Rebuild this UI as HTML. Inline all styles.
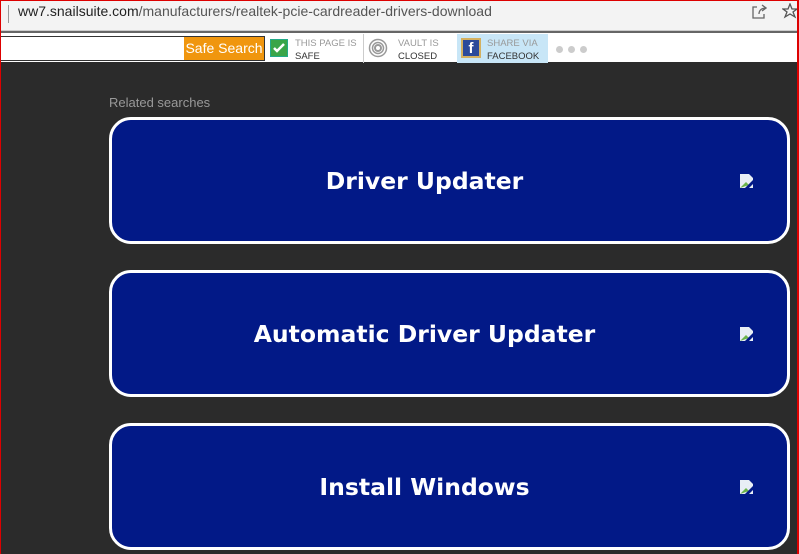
<!DOCTYPE html>
<html><head><meta charset="utf-8"><style>
*{margin:0;padding:0;box-sizing:border-box}
body{width:799px;height:554px;overflow:hidden;background:#2b2b2b;font-family:"Liberation Sans",sans-serif;position:relative}
.frame{position:absolute;inset:0;border-left:1px solid #d00;border-right:2px solid #d00;border-top:1px solid #d00;pointer-events:none;z-index:10}
.url{position:absolute;left:0;top:0;width:799px;height:31px;background:#f3f3f3;border-bottom:1px solid #ccc}
.url .t{position:absolute;left:18px;top:3px;font-size:14px;color:#555;white-space:nowrap}
.url .dk{color:#222}
.url .bar{position:absolute;left:8px;top:5px;width:1px;height:18px;background:#999}
.tb{position:absolute;left:0;top:31px;width:799px;height:31px;background:#fff;border-top:2px solid #666}
.inp{position:absolute;left:0;top:3px;width:265px;height:25px;border:1px solid #333;border-left:none;background:#fff}
.ss{position:absolute;left:184px;top:4px;width:80px;height:23px;background:#f0960e;color:#fff;font-size:14px;line-height:23px;text-align:center}
.sm{position:absolute;font-size:9.5px;color:#999;line-height:13px}
.sm b{font-weight:normal;color:#333}
.sep{position:absolute;top:1px;width:1px;height:29px;background:#ccc}
.related{position:absolute;left:109px;top:95px;font-size:13px;color:#999}
.btn{position:absolute;left:109px;width:681px;height:127px;background:#021987;border:3px solid #fff;border-radius:22px;color:#fff;font-family:"DejaVu Sans",sans-serif;font-weight:bold;font-size:23.5px;text-align:center;line-height:123px;padding-right:50px}
.ic{position:absolute;right:32px;top:53px;width:16px;height:16px}
</style></head><body>
<div class="url"><div class="bar"></div><div class="t"><span class="dk">ww7.snailsuite.com</span>/manufacturers/realtek-pcie-cardreader-drivers-download</div>
<svg style="position:absolute;left:751px;top:4px" width="16" height="16" viewBox="0 0 16 16" fill="none" stroke="#666" stroke-width="1.3"><path d="M6 3H2v11h11v-4M8 10c0-4 3-6 7-6M11 1l4 3-4 3"/></svg>
<svg style="position:absolute;left:782px;top:3px" width="16" height="16" viewBox="0 0 16 16" fill="none" stroke="#555" stroke-width="1.3"><path d="M8 1l2 5h5l-4 3 2 5-5-3-5 3 2-5-4-3h5z"/></svg>
</div>
<div class="tb">
<div class="inp"></div><div class="ss">Safe Search</div>
<div style="position:absolute;left:270px;top:6px;width:18px;height:18px;background:#3aa548;border:1px solid #2a8"><svg width="16" height="16" viewBox="0 0 16 16"><path d="M3 8l3 3 7-7" stroke="#fff" stroke-width="2.5" fill="none"/></svg></div>
<div class="sm" style="left:295px;top:4px">THIS PAGE IS<br><b>SAFE</b></div>
<div class="sep" style="left:363px"></div>
<svg style="position:absolute;left:368px;top:5px" width="20" height="20" viewBox="0 0 20 20" fill="none" stroke="#999" stroke-width="1.5"><circle cx="10" cy="10" r="8.5"/><circle cx="10" cy="10" r="5.5"/><circle cx="10" cy="10" r="3" stroke-width="2"/></svg>
<div class="sm" style="left:398px;top:4px">VAULT IS<br><b>CLOSED</b></div>
<div style="position:absolute;left:457px;top:1px;width:91px;height:29px;background:#c8e6f7"></div>
<div style="position:absolute;left:461px;top:5px;width:20px;height:20px;background:#2c4a9a;border:2px solid #d4b060;color:#fff;font-weight:bold;font-size:15px;line-height:18px;text-align:center">f</div>
<div class="sm" style="left:487px;top:4px">SHARE VIA<br><b>FACEBOOK</b></div>
<div style="position:absolute;left:556px;top:13px;width:7px;height:7px;border-radius:50%;background:#ccc"></div>
<div style="position:absolute;left:568px;top:13px;width:7px;height:7px;border-radius:50%;background:#ccc"></div>
<div style="position:absolute;left:580px;top:13px;width:7px;height:7px;border-radius:50%;background:#ccc"></div>
</div>
<div class="related">Related searches</div>
<div class="btn" style="top:117px">Driver Updater<svg class="ic" viewBox="0 0 16 16"><path d="M1 1h9l4 4v10H1z" fill="#e8eef5"/><path d="M1 15l6-6 3 3z" fill="#6bb34a"/><path d="M6 15L15 6v4l-5 5z" fill="#021987"/></svg></div>
<div class="btn" style="top:270px">Automatic Driver Updater<svg class="ic" viewBox="0 0 16 16"><path d="M1 1h9l4 4v10H1z" fill="#e8eef5"/><path d="M1 15l6-6 3 3z" fill="#6bb34a"/><path d="M6 15L15 6v4l-5 5z" fill="#021987"/></svg></div>
<div class="btn" style="top:423px">Install Windows<svg class="ic" viewBox="0 0 16 16"><path d="M1 1h9l4 4v10H1z" fill="#e8eef5"/><path d="M1 15l6-6 3 3z" fill="#6bb34a"/><path d="M6 15L15 6v4l-5 5z" fill="#021987"/></svg></div>
<div class="frame"></div>
</body></html>
